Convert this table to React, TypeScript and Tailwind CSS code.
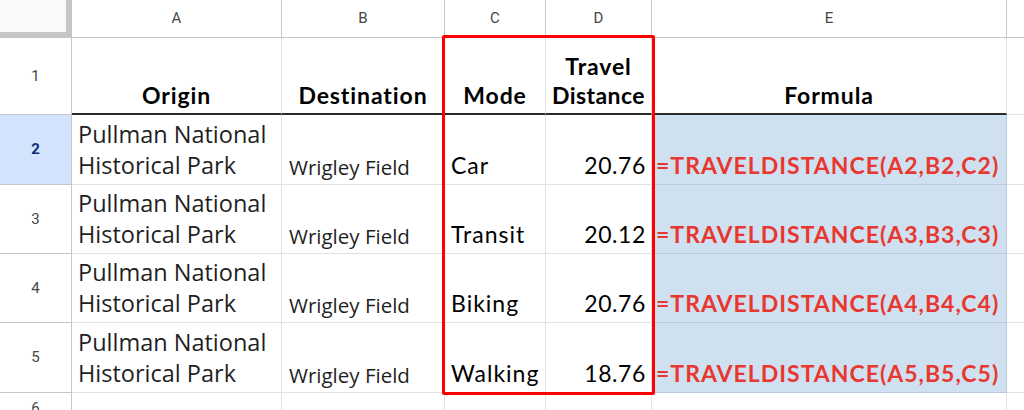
const rows = [
    { n: 2, mode: 'Car', dist: '20.76', sel: true },
    { n: 3, mode: 'Transit', dist: '20.12', sel: false },
    { n: 4, mode: 'Biking', dist: '20.76', sel: false },
    { n: 5, mode: 'Walking', dist: '18.76', sel: false },
];

const heights = ['h-[70px]', 'h-[69px]', 'h-[69px]', 'h-[70px]'];

const nunito = "font-['Lato','Open_Sans',sans-serif]";
const gsans = "font-['Open_Sans','Roboto',sans-serif]";
const headText = `text-[23px] tracking-[0.9px] font-bold text-black leading-[29px] ${nunito}`;
const headBox = 'h-[77px] border-r border-[#e1e1e1] border-b-2 border-b-[#2b2b2b] pb-[3px]';
const head = `${headBox} flex items-end justify-center ${headText}`;

function ColHead({ label }: { label: string }) {
    return (
        <div className="h-[38px] border-r border-b border-[#c7c7c7] bg-white flex items-center justify-center text-[15px] text-[#444746] font-['Roboto',sans-serif]">
            {label}
        </div>
    );
}

export default function App() {
    return (
        <div className="relative w-[1024px] h-[410px] overflow-hidden bg-white">
            <div className="grid grid-cols-[72px_210px_163px_101px_106px_355px_17px]">
                {/* column headers */}
                <div className="h-[38px] bg-[#f8f9fa] border-r-[6px] border-b-[6px] border-[#c4c7c5]" />
                <ColHead label="A" />
                <ColHead label="B" />
                <ColHead label="C" />
                <ColHead label="D" />
                <ColHead label="E" />
                <div className="h-[38px] border-b border-[#c7c7c7] bg-white" />

                {/* row 1 */}
                <div className="h-[77px] border-r border-b border-[#c7c7c7] flex items-center justify-center text-[15px] text-[#444746] font-['Roboto',sans-serif]">
                    1
                </div>
                <div className={head}>Origin</div>
                <div className={head}>Destination</div>
                <div className={head}>Mode</div>
                <div className={`${headBox} flex flex-col items-center justify-end text-center ${headText}`}>
                    <span>Travel</span>
                    <span className="tracking-[0.4px]">Distance</span>
                </div>
                <div className={head}>Formula</div>
                <div className="h-[77px] border-b border-[#e1e1e1]" />

                {rows.map((r, i) => (
                    <Row key={r.n} {...r} h={heights[i]} />
                ))}

                {/* row 6 */}
                <div className="h-[30px] border-r border-[#c7c7c7] flex items-start justify-center pt-[6px] text-[15px] leading-[18px] text-[#444746] font-['Roboto',sans-serif]">
                    6
                </div>
                <div className="h-[30px] border-r border-[#e1e1e1]" />
                <div className="h-[30px] border-r border-[#e1e1e1]" />
                <div className="h-[30px] border-r border-[#e1e1e1]" />
                <div className="h-[30px] border-r border-[#e1e1e1]" />
                <div className="h-[30px] border-r border-[#e1e1e1]" />
                <div className="h-[30px]" />
            </div>

            {/* highlight box around C:D */}
            <div className="absolute left-[442px] top-[35px] w-[213px] h-[360px] border-[3px] border-[#ff0000] rounded-[2px]" />
        </div>
    );
}

function Row({ n, mode, dist, sel, h }: { n: number; mode: string; dist: string; sel: boolean; h: string }) {
    return (
        <>
            <div
                className={`${h} border-r border-b border-[#c7c7c7] flex items-center justify-center text-[15px] font-['Roboto',sans-serif] ${
                    sel ? 'bg-[#d3e3fd] text-[#0b2e6f] font-bold' : 'bg-white text-[#444746]'
                }`}
            >
                {n}
            </div>
            <div className={`${h} border-r border-b border-[#e1e1e1] flex flex-col justify-end pl-[6px] pb-[3px] text-[23.5px] leading-[31px] text-[#1f1f1f] ${gsans}`}>
                <span>Pullman National</span>
                <span>Historical Park</span>
            </div>
            <div className={`${h} border-r border-b border-[#e1e1e1] flex items-end pl-[7px] pb-[4px] text-[20.5px] leading-[26px] text-[#1f1f1f] ${gsans}`}>
                Wrigley Field
            </div>
            <div className={`${h} border-r border-b border-[#e1e1e1] flex items-end pl-[6px] pb-[4px] text-[23px] tracking-[1px] leading-[29px] text-black ${nunito}`}>
                {mode}
            </div>
            <div className={`${h} border-r border-b border-[#e1e1e1] flex items-end justify-end pr-[5px] pb-[4px] text-[23px] tracking-[0.6px] leading-[29px] text-black ${nunito}`}>
                {dist}
            </div>
            <div className={`${h} border-r border-b border-r-[#b8c8da] border-b-[#bccbdb] bg-[#cfe0f1] flex items-end pl-[4px] pb-[4px] text-[23px] tracking-[1px] leading-[29px] font-bold text-[#e8372e] ${nunito}`}>
                {`=TRAVELDISTANCE(A${n},B${n},C${n})`}
            </div>
            <div className="border-b border-[#e1e1e1]" />
        </>
    );
}
